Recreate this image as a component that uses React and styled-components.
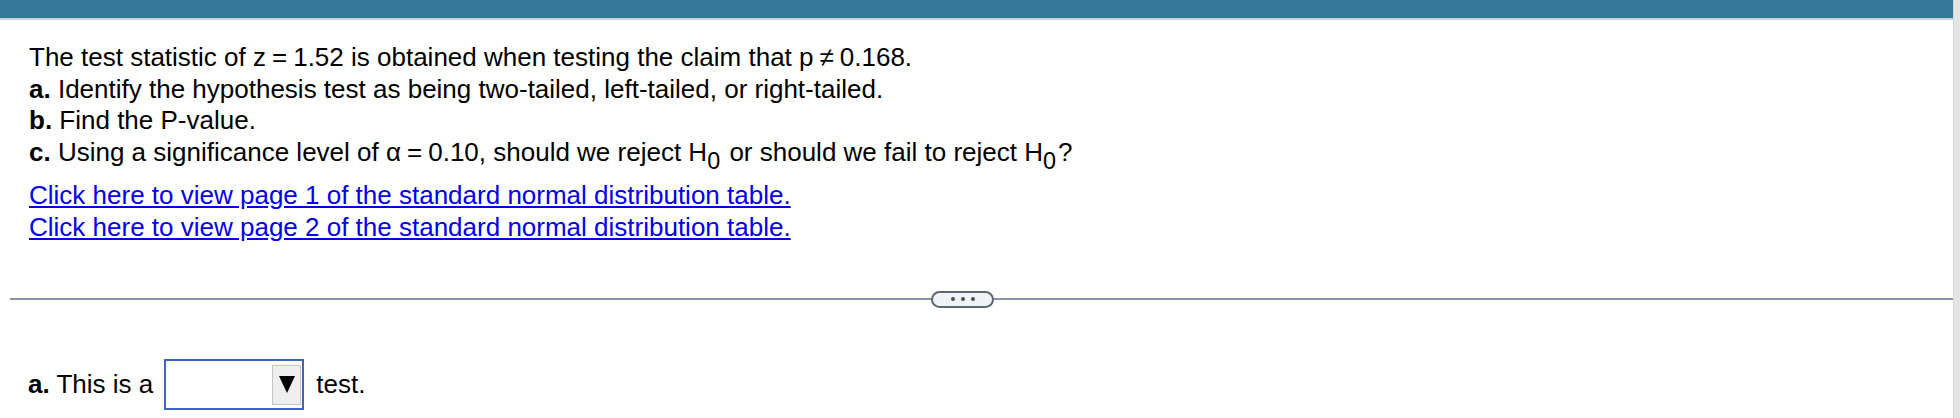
import React from 'react'
import styled, { createGlobalStyle } from 'styled-components'

const Global = createGlobalStyle`
  html, body {
    margin: 0;
    padding: 0;
    background: #fff;
  }
  body {
    font-family: "Liberation Sans", Arial, sans-serif;
    color: #000;
  }
`

function App() {
  return (
    <Page>
      <Global />
      <Main>
        <TopBar />
        <Question>
          <Line>The test statistic of z<Op>=</Op>1.52 is obtained when testing the claim that p<Op>≠</Op>0.168.</Line>
          <Line><b>a.</b> Identify the hypothesis test as being two-tailed, left-tailed, or right-tailed.</Line>
          <Line><b>b.</b> Find the P-value.</Line>
          <Line>
            <b>c.</b> Using a significance level of α<Op>=</Op>0.10, should we reject H<Sub>0</Sub> or should we fail to reject H<Sub>0</Sub>?
          </Line>
          <Links>
            <Link href="#">Click here to view page 1 of the standard normal distribution table.</Link>
            <Link href="#">Click here to view page 2 of the standard normal distribution table.</Link>
          </Links>
        </Question>

        <Divider>
          <More>
            <Dot />
            <Dot />
            <Dot />
          </More>
        </Divider>

        <Answer>
          <b>a.</b> This is a
          <Select>
            <Arrow>
              <Triangle />
            </Arrow>
          </Select>
          test.
        </Answer>
      </Main>
      <Track />
    </Page>
  )
}

const Page = styled.div`
  display: flex;
  width: 100%;
  height: 418px;
  overflow: hidden;
`

const Main = styled.div`
  flex: 1;
  display: flex;
  flex-direction: column;
`

const TopBar = styled.div`
  height: 18px;
  background: #357797;
  border-bottom: 2px solid #cdd0da;
`

const Question = styled.div`
  padding: 22px 0 0 29px;
  font-size: 26px;
  line-height: 31.5px;
`

const Line = styled.div`
  white-space: nowrap;
`

const Op = styled.span`
  margin: 0 6px;
`

const Sub = styled.span`
  font-size: 0.9em;
  line-height: 0;
  position: relative;
  top: 8px;
  margin-right: 2px;
`

const Links = styled.div`
  margin-top: 12px;
  display: flex;
  flex-direction: column;
`

const Link = styled.a`
  color: #0000ee;
  text-decoration: underline;
  width: max-content;
`

const Divider = styled.div`
  margin: 55px 0 0 10px;
  height: 2px;
  background: #8a93a3;
  display: flex;
  align-items: center;
  padding-left: 921px;
`

const More = styled.div`
  width: 59px;
  height: 13px;
  border: 2px solid #5d6673;
  border-radius: 10px;
  background: #f2f3f5;
  display: flex;
  align-items: center;
  justify-content: center;
  gap: 6px;
`

const Dot = styled.span`
  width: 4px;
  height: 4px;
  border-radius: 50%;
  background: #4a4f57;
`

const Answer = styled.div`
  display: flex;
  align-items: center;
  padding: 59px 0 0 28px;
  font-size: 26px;
  white-space: pre;
`

const Select = styled.div`
  width: 135px;
  height: 47px;
  border: 2px solid #3f64c6;
  margin: 0 12px 0 11px;
  display: flex;
  align-items: center;
  justify-content: flex-end;
  padding-right: 1px;
`

const Arrow = styled.div`
  width: 27px;
  height: 38px;
  background: #efefef;
  border: 1px solid #c6c6c6;
  display: flex;
  align-items: center;
  justify-content: center;
`

const Triangle = styled.span`
  width: 0;
  height: 0;
  border-left: 8.5px solid transparent;
  border-right: 8.5px solid transparent;
  border-top: 17px solid #000;
`

const Track = styled.div`
  width: 6px;
  background: #e4e4e4;
  border-left: 1px solid #d8d8d8;
`

export default App
